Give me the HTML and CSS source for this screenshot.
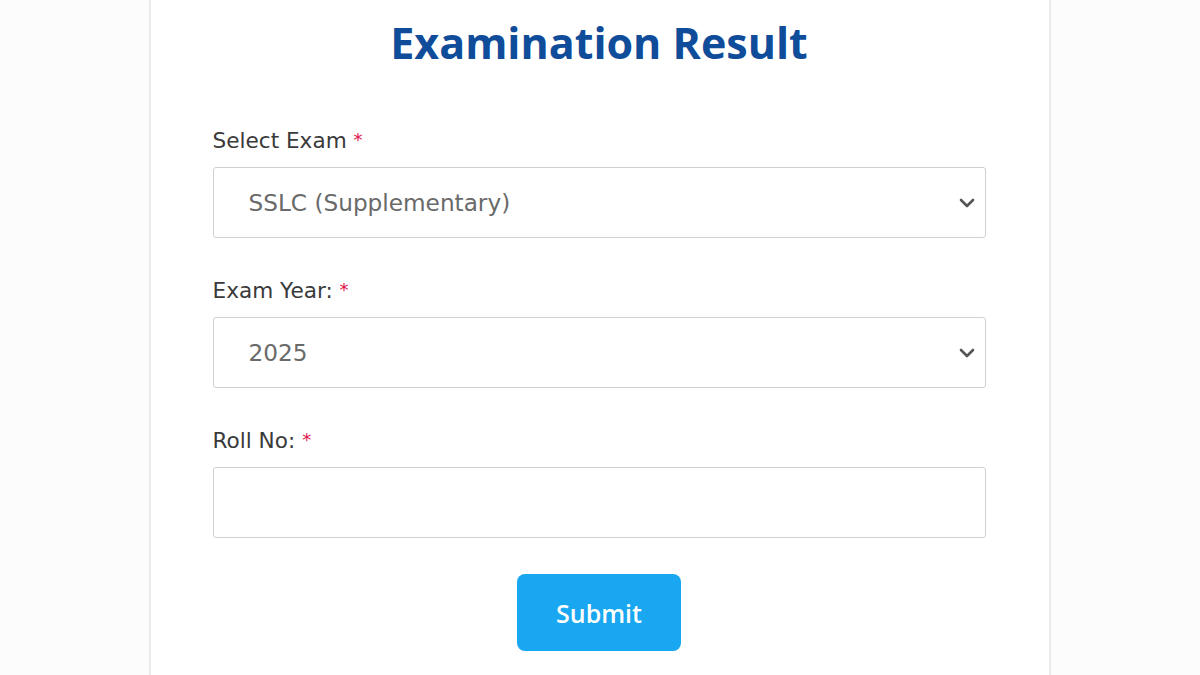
FILE: index.html
```html
<!DOCTYPE html>
<html>
<head>
<meta charset="utf-8">
<link rel="stylesheet" href="styles.css">
</head>
<body>
<div class="page">
  <div class="card">
    <h1 class="title">Examination Result</h1>
    <form class="form">
      <div class="group">
        <label class="label">Select Exam <span class="req">*</span></label>
        <div class="select">
          <span class="value">SSLC (Supplementary)</span>
          <svg class="chev" viewBox="0 0 16 10" width="16" height="10"><path d="M2 2 L8 8 L14 2" fill="none" stroke="#555" stroke-width="2.6" stroke-linecap="round" stroke-linejoin="round"/></svg>
        </div>
      </div>
      <div class="group">
        <label class="label">Exam Year: <span class="req">*</span></label>
        <div class="select">
          <span class="value">2025</span>
          <svg class="chev" viewBox="0 0 16 10" width="16" height="10"><path d="M2 2 L8 8 L14 2" fill="none" stroke="#555" stroke-width="2.6" stroke-linecap="round" stroke-linejoin="round"/></svg>
        </div>
      </div>
      <div class="group">
        <label class="label">Roll No: <span class="req">*</span></label>
        <div class="input"></div>
      </div>
      <div class="actions">
        <button type="button" class="btn">Submit</button>
      </div>
    </form>
  </div>
</div>
</body>
</html>
```
FILE: styles.css
```css
html, body {
  margin: 0;
  padding: 0;
  background: #fcfcfc;
  font-family: "DejaVu Sans", "Liberation Sans", sans-serif;
}
.page {
  width: 1200px;
  height: 675px;
  overflow: hidden;
  display: flex;
  justify-content: center;
}
.card {
  box-sizing: border-box;
  width: 902px;
  margin-left: -1px;
  height: 700px;
  background: #ffffff;
  border-left: 2px solid #ececec;
  border-right: 2px solid #ececec;
  padding: 14px 63px 0 62px;
}
.title {
  margin: 0;
  text-align: center;
  font-family: "Open Sans", "DejaVu Sans", sans-serif;
  font-size: 43px;
  line-height: 58px;
  font-weight: 700;
  color: #0f4c9a;
}
.form {
  margin-top: 54px;
}
.group {
  margin-bottom: 38px;
}
.label {
  display: block;
  height: 30px;
  font-size: 21.6px;
  line-height: 30px;
  color: #3a3a3a;
  margin-bottom: 11px;
}
.req {
  color: #e0134a;
  font-size: 18px;
  line-height: 0;
  vertical-align: 2px;
}
.select, .input {
  box-sizing: border-box;
  height: 71px;
  border: 1.5px solid #cfcfd4;
  border-radius: 3px;
  background: #fff;
  display: flex;
  align-items: center;
  justify-content: space-between;
  padding: 0 10px 0 35px;
}
.value {
  font-size: 23.2px;
  color: #6a6a6a;
}
.chev {
  display: block;
}
.actions {
  display: flex;
  justify-content: center;
  margin-top: -2px;
}
.btn {
  width: 164px;
  height: 77px;
  border: none;
  border-radius: 8px;
  background: #18a7f0;
  color: #ffffff;
  font-family: "Open Sans", sans-serif;
  font-size: 25px;
  font-weight: 600;
}
```
